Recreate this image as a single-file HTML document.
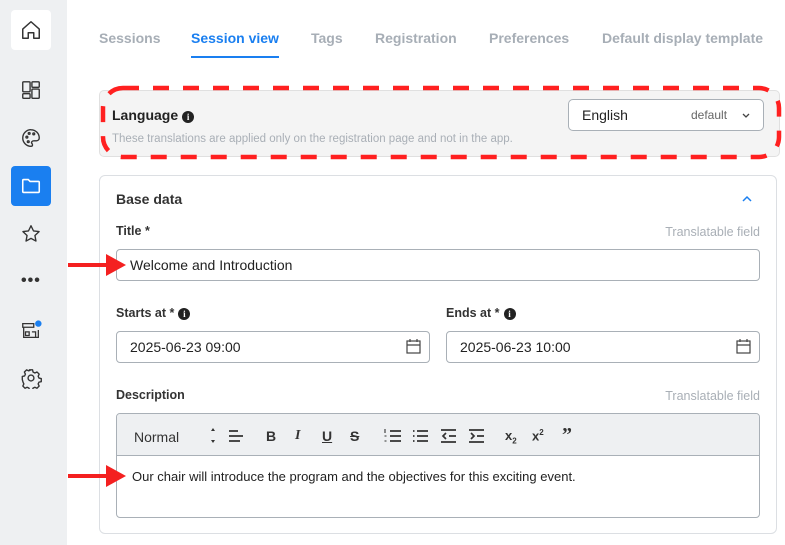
<!DOCTYPE html>
<html><head><style>
*{box-sizing:border-box;margin:0;padding:0}
body{width:785px;height:545px;overflow:hidden;background:#fff;font-family:"Liberation Sans",Arial,sans-serif;position:relative;color:#212529}
.side{position:absolute;left:0;top:0;width:67px;height:545px;background:#eef0f2}
.ic{position:absolute;left:11px;width:40px;height:40px;border-radius:4px;display:flex;align-items:center;justify-content:center}
.abs{position:absolute}
.tab{position:absolute;top:30px;font-size:14px;font-weight:bold;color:#a7aeb6}
.lbl{position:absolute;font-size:12.5px;font-weight:bold;color:#333}
.tf{position:absolute;right:25px;font-size:12.5px;color:#a9afb6}
.inp{position:absolute;border:1px solid #a9b0b7;border-radius:4px;background:#fff;font-size:14px;color:#222;padding-left:13px;display:flex;align-items:center}
.info{display:inline-block;width:12px;height:12px;border-radius:50%;background:#222;color:#fff;font-size:9px;text-align:center;line-height:12px;font-weight:bold;vertical-align:0px;margin-left:4px;font-family:"Liberation Serif",serif}
.tb{position:absolute;top:428px;font-size:14px;color:#333;font-weight:bold}
</style></head><body>
<div class="side">
 <div class="ic" style="top:10px;background:#fff"><svg width="22" height="22" viewBox="0 0 24 24" fill="none" stroke="#333" stroke-width="1.6"><path d="M3 11L12 3l9 8v10h-6v-6H9v6H3z" stroke-linejoin="round"/></svg></div>
 <div class="ic" style="top:70px"><svg width="22" height="22" viewBox="0 0 24 24" fill="none" stroke="#333" stroke-width="1.5"><rect x="3" y="3" width="8" height="11" rx="1"/><rect x="13" y="3" width="8" height="6" rx="1"/><rect x="13" y="11" width="8" height="10" rx="1"/><rect x="3" y="16" width="8" height="5" rx="1"/></svg></div>
 <div class="ic" style="top:118px"><svg width="22" height="22" viewBox="0 0 24 24" fill="none" stroke="#333" stroke-width="1.5"><path d="M12 3a9 9 0 100 18c2 0 2-2 1-3s0-3 2-3h3a3 3 0 003-3c0-5-4-9-9-9z"/><circle cx="7.5" cy="11" r="1"/><circle cx="10" cy="7" r="1"/><circle cx="15" cy="7.5" r="1"/><circle cx="9" cy="16" r="1"/></svg></div>
 <div class="ic" style="top:166px;background:#1a7ff0"><svg width="22" height="22" viewBox="0 0 24 24" fill="none" stroke="#fff" stroke-width="1.7"><path d="M3 6a1 1 0 011-1h5l2 2h9a1 1 0 011 1v10a1 1 0 01-1 1H4a1 1 0 01-1-1z"/></svg></div>
 <div class="ic" style="top:214px"><svg width="22" height="22" viewBox="0 0 24 24" fill="none" stroke="#333" stroke-width="1.5"><path d="M12 3l2.7 5.6 6.1.8-4.5 4.2 1.1 6.1L12 16.8l-5.4 2.9 1.1-6.1-4.5-4.2 6.1-.8z" stroke-linejoin="round"/></svg></div>
 <div class="abs" style="left:21px;top:272px;font-size:16px;font-weight:bold;color:#333;letter-spacing:1px">•••</div>
 <div class="ic" style="top:310px"><svg width="22" height="22" viewBox="0 0 24 24" fill="none" stroke="#333" stroke-width="1.4"><path d="M3 5h12v4H3zM4 9v11h16V12M6 14h4v4H6zM13 14h4v6"/><circle cx="20" cy="5" r="3.5" fill="#1a7ff0" stroke="none"/></svg></div>
 <div class="ic" style="top:358px"><svg width="22" height="22" viewBox="0 0 24 24" fill="none" stroke="#333" stroke-width="1.5"><circle cx="12" cy="12" r="3.2"/><path d="M10.3 3h3.4l.5 2.5 2 1 2.3-1.1 2.4 2.4-1.1 2.3.9 2 2.5.5v3.4l-2.5.5-.9 2 1.1 2.3-2.4 2.4-2.3-1.1-2 .9-.5 2.5h-3.4l-.5-2.5-2-.9-2.3 1.1-2.4-2.4 1.1-2.3-.9-2L2.5 13.7v-3.4L5 9.8l.9-2-1.1-2.3 2.4-2.4 2.3 1.1 2-.9z" stroke-linejoin="round"/></svg></div>
</div>

<div class="tab" style="left:99px">Sessions</div>
<div class="tab" style="left:191px;color:#1a7ff0">Session view</div>
<div class="abs" style="left:191px;top:56px;width:88px;height:2px;background:#1a7ff0"></div>
<div class="tab" style="left:311px">Tags</div>
<div class="tab" style="left:375px">Registration</div>
<div class="tab" style="left:489px">Preferences</div>
<div class="tab" style="left:602px">Default display template</div>

<div class="abs" style="left:99px;top:90px;width:681px;height:67px;background:#f4f4f4;border:1px solid #e0e0e0;border-radius:5px"></div>
<svg class="abs" style="left:99px;top:85px" width="685" height="77"><rect x="4" y="3" width="676" height="69" rx="20" fill="none" stroke="#ff2020" stroke-width="4.5" stroke-dasharray="16 14"/></svg>
<div class="abs" style="left:112px;top:107px;font-size:14px;font-weight:bold;color:#222">Language<span class="info">i</span></div>
<div class="abs" style="left:112px;top:133px;font-size:11.5px;color:#a9afb6">These translations are applied only on the registration page and not in the app.</div>
<div class="inp" style="left:568px;top:99px;width:196px;height:32px;border-radius:5px">English<span style="position:absolute;left:122px;font-size:12px;color:#666">default</span><svg style="position:absolute;left:172px;top:12px" width="10" height="8"><path d="M2 2l3 3 3-3" fill="none" stroke="#444" stroke-width="1.3"/></svg></div>

<div class="abs" style="left:99px;top:175px;width:678px;height:359px;border:1px solid #dcdfe3;border-radius:6px"></div>
<div class="abs" style="left:116px;top:191px;font-size:14px;font-weight:bold;color:#333">Base data</div>
<svg class="abs" style="left:741px;top:194px" width="12" height="10"><path d="M2 7l4-4 4 4" fill="none" stroke="#1a7ff0" stroke-width="1.5"/></svg>

<div class="lbl" style="left:116px;top:224px">Title *</div>
<div class="tf" style="top:225px">Translatable field</div>
<div class="inp" style="left:116px;top:249px;width:644px;height:32px">Welcome and Introduction</div>

<div class="lbl" style="left:116px;top:306px">Starts at *<span class="info">i</span></div>
<div class="lbl" style="left:446px;top:306px">Ends at *<span class="info">i</span></div>
<div class="inp" style="left:116px;top:331px;width:314px;height:32px">2025-06-23 09:00</div>
<div class="inp" style="left:446px;top:331px;width:314px;height:32px">2025-06-23 10:00</div>
<svg class="abs" style="left:405px;top:338px" width="17" height="17" viewBox="0 0 17 17" fill="none" stroke="#444" stroke-width="1.2"><rect x="2" y="3" width="13" height="12"/><path d="M2 7h13M5 1v3M12 1v3"/></svg>
<svg class="abs" style="left:735px;top:338px" width="17" height="17" viewBox="0 0 17 17" fill="none" stroke="#444" stroke-width="1.2"><rect x="2" y="3" width="13" height="12"/><path d="M2 7h13M5 1v3M12 1v3"/></svg>

<div class="lbl" style="left:116px;top:388px">Description</div>
<div class="tf" style="top:389px">Translatable field</div>
<div class="abs" style="left:116px;top:413px;width:644px;height:105px;border:1px solid #a9b0b7;border-radius:4px;overflow:hidden">
 <div style="height:42px;background:#eef0f2;border-bottom:1px solid #a9b0b7"></div>
</div>
<div class="tb" style="left:134px;font-weight:normal;top:429px">Normal</div>
<svg class="abs" style="left:205px;top:426px" width="380" height="20" viewBox="0 0 380 20" fill="none" stroke="#333" stroke-width="1.7">
 <path d="M6 5l2-3 2 3zM6 14l2 3 2-3z" fill="#333" stroke="none"/>
 <path d="M24 5h9M24 10h14M24 15h11"/>
 <path d="M185 5h11M185 10h11M185 15h11" />
 <path d="M180 3v4M179.5 10h2M179.5 15h2" stroke-width="1.1"/>
 <path d="M208 5h1.5M208 10h1.5M208 15h1.5M212 5h11M212 10h11M212 15h11"/>
 <path d="M236 4h15M244 10h7M236 16h15M241 7l-3 3 3 3"/>
 <path d="M264 4h15M272 10h7M264 16h15M266 7l3 3-3 3"/>
</svg>
<div class="tb" style="left:266px">B</div>
<div class="tb" style="left:295px;font-style:italic;font-family:'Liberation Serif',serif">I</div>
<div class="tb" style="left:322px;text-decoration:underline">U</div>
<div class="tb" style="left:350px;text-decoration:line-through">S</div>
<div class="tb" style="left:505px;font-size:13px">x<sub style="font-size:8px">2</sub></div>
<div class="tb" style="left:532px;font-size:13px">x<sup style="font-size:8px">2</sup></div>
<div class="tb" style="left:562px;font-size:20px;top:424px;font-family:'Liberation Serif',serif">&#8221;</div>
<div class="abs" style="left:132px;top:469px;font-size:13px;color:#222">Our chair will introduce the program and the objectives for this exciting event.</div>

<svg class="abs" style="left:60px;top:250px" width="70" height="30"><path d="M8 15h40" stroke="#f42020" stroke-width="4"/><path d="M46 4l20 11-20 11z" fill="#f42020"/></svg>
<svg class="abs" style="left:60px;top:461px" width="70" height="30"><path d="M8 15h40" stroke="#f42020" stroke-width="4"/><path d="M46 4l20 11-20 11z" fill="#f42020"/></svg>
</body></html>
